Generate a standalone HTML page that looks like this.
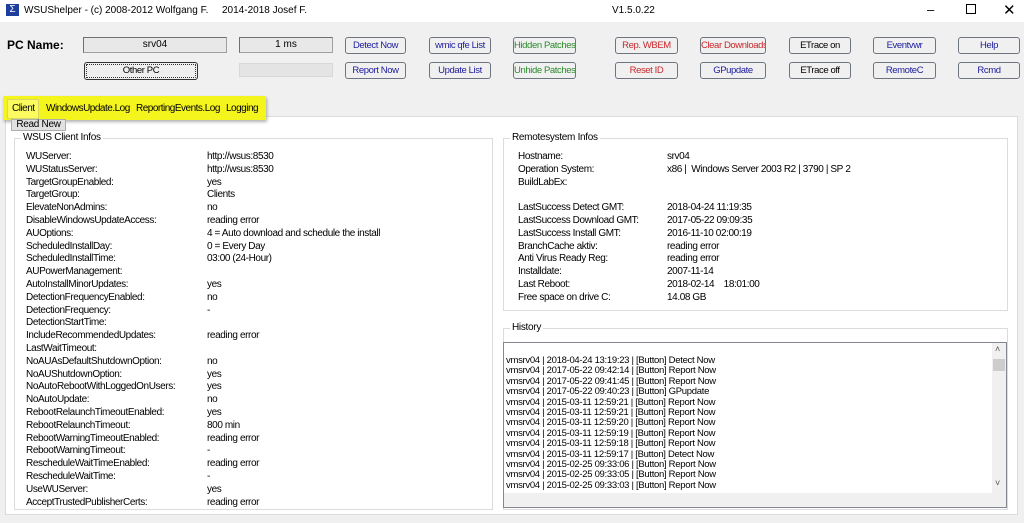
<!DOCTYPE html><html><head><meta charset="utf-8"><style>
*{box-sizing:border-box;margin:0;padding:0}
body{width:1024px;height:523px;background:#f0f0f0;font-family:"Liberation Sans",sans-serif;font-size:10px;color:#000;position:relative;overflow:hidden}
.a{position:absolute;white-space:nowrap}
.btn{position:absolute;height:17px;border:1px solid #6e7580;border-radius:3px;background:#f0f0f0;text-align:center;line-height:15px;font-size:9.5px;letter-spacing:-0.4px;white-space:nowrap;overflow:hidden}
.fld{position:absolute;height:16px;border:1px solid #a0a0a0;border-top-color:#707070;border-left-color:#707070;background:#e8e8e8;text-align:center;line-height:14px}
.bl{color:#1c1c9c}.rd{color:#c8282c}.gr{color:#2a8a2a}
.gb{position:absolute;border:1px solid #dcdcdc}
.gb .t{position:absolute;top:-7px;left:6px;background:#fff;padding:0 2px;letter-spacing:-0.3px}
.r{position:absolute;white-space:nowrap;letter-spacing:-0.4px}
.h{position:absolute;left:506px;font-size:9.5px;letter-spacing:-0.3px;white-space:nowrap}
.tab{position:absolute;top:103px;letter-spacing:-0.5px;white-space:nowrap}
</style></head><body>
<div class="a" style="left:0;top:0;width:1024px;height:22px;background:#fff"></div>
<div class="a" style="left:6px;top:4px;width:13px;height:12px;background:#1e3e9e;color:#fff;font-size:10px;line-height:12px;text-align:center">Σ</div>
<div class="a" style="left:24px;top:5px;font-size:10px">WSUShelper - (c) 2008-2012 Wolfgang F.</div>
<div class="a" style="left:222px;top:5px;font-size:10px">2014-2018 Josef F.</div>
<div class="a" style="left:612px;top:5px;font-size:10px">V1.5.0.22</div>
<div class="a" style="left:927px;top:2px;font-size:13px">–</div>
<div class="a" style="left:966px;top:4px;width:10px;height:10px;border:1px solid #000"></div>
<div class="a" style="left:1003px;top:1px;font-size:15px">✕</div>

<div class="a" style="left:7px;top:38px;font-size:12px;font-weight:bold">PC Name:</div>
<div class="fld" style="left:83px;top:37px;width:144px">srv04</div>
<div class="fld" style="left:239px;top:37px;width:94px">1 ms</div>
<div class="btn" style="left:84px;top:62px;width:114px;height:18px;border:1px solid #333;outline:1px dotted #333;outline-offset:-3px;line-height:16px">Other PC</div>
<div class="a" style="left:239px;top:63px;width:94px;height:14px;background:#e4e4e4;border:1px solid #d8d8d8"></div>

<div class="btn bl" style="left:345px;top:37px;width:61px">Detect Now</div>
<div class="btn bl" style="left:345px;top:62px;width:61px">Report Now</div>
<div class="btn bl" style="left:429px;top:37px;width:62px">wmic qfe List</div>
<div class="btn bl" style="left:429px;top:62px;width:62px">Update List</div>
<div class="btn gr" style="left:513px;top:37px;width:63px">Hidden Patches</div>
<div class="btn gr" style="left:513px;top:62px;width:63px">Unhide Patches</div>
<div class="btn rd" style="left:615px;top:37px;width:63px">Rep. WBEM</div>
<div class="btn rd" style="left:615px;top:62px;width:63px">Reset ID</div>
<div class="btn rd" style="left:700px;top:37px;width:66px">Clear Downloads</div>
<div class="btn bl" style="left:700px;top:62px;width:66px">GPupdate</div>
<div class="btn" style="left:789px;top:37px;width:62px">ETrace on</div>
<div class="btn" style="left:789px;top:62px;width:62px">ETrace off</div>
<div class="btn bl" style="left:873px;top:37px;width:63px">Eventvwr</div>
<div class="btn bl" style="left:873px;top:62px;width:63px">RemoteC</div>
<div class="btn bl" style="left:958px;top:37px;width:62px">Help</div>
<div class="btn bl" style="left:958px;top:62px;width:62px">Rcmd</div>

<div class="a" style="left:5px;top:116px;width:1013px;height:399px;background:#fff;border:1px solid #dcdcdc"></div>
<div class="a" style="left:3px;top:96px;width:263px;height:24px;background:#f5f51e;box-shadow:1px 2px 3px rgba(0,0,0,0.3)"></div>
<div class="a" style="left:7px;top:99px;width:32px;height:20px;background:#fbfb60;border:1px solid #d8d860"></div>
<div class="tab" style="left:12px">Client</div>
<div class="tab" style="left:46px">WindowsUpdate.Log</div>
<div class="tab" style="left:136px">ReportingEvents.Log</div>
<div class="tab" style="left:226px">Logging</div>
<div class="a" style="left:11px;top:119px;width:55px;height:12px;background:#e1e1e1;border:1px solid #adadad;text-align:center;line-height:10px;letter-spacing:-0.3px">Read New</div>

<div class="gb" style="left:14px;top:138px;width:479px;height:372px"><div class="t">WSUS Client Infos</div></div>
<div class="gb" style="left:503px;top:138px;width:505px;height:173px"><div class="t">Remotesystem Infos</div></div>
<div class="gb" style="left:503px;top:328px;width:505px;height:182px"><div class="t">History</div></div>
<div class="a" style="left:503px;top:342px;width:504px;height:166px;border:1px solid #828790;background:#fff"></div>
<div class="a" style="left:992px;top:343px;width:14px;height:150px;background:#f0f0f0"></div>
<div class="a" style="left:993px;top:359px;width:12px;height:12px;background:#cdcdcd"></div>
<div class="a" style="left:995px;top:344px;font-size:9px;color:#555">˄</div>
<div class="a" style="left:995px;top:478px;font-size:9px;color:#555">˅</div>
<div class="a" style="left:504px;top:493px;width:502px;height:14px;background:#f0f0f0"></div>

<div id="L"></div>
<script>
var L=[["WUServer:","http://wsus:8530"],["WUStatusServer:","http://wsus:8530"],["TargetGroupEnabled:","yes"],["TargetGroup:","Clients"],["ElevateNonAdmins:","no"],["DisableWindowsUpdateAccess:","reading error"],["AUOptions:","4 = Auto download and schedule the install"],["ScheduledInstallDay:","0 = Every Day"],["ScheduledInstallTime:","03:00 (24-Hour)"],["AUPowerManagement:",""],["AutoInstallMinorUpdates:","yes"],["DetectionFrequencyEnabled:","no"],["DetectionFrequency:","-"],["DetectionStartTime:",""],["IncludeRecommendedUpdates:","reading error"],["LastWaitTimeout:",""],["NoAUAsDefaultShutdownOption:","no"],["NoAUShutdownOption:","yes"],["NoAutoRebootWithLoggedOnUsers:","yes"],["NoAutoUpdate:","no"],["RebootRelaunchTimeoutEnabled:","yes"],["RebootRelaunchTimeout:","800 min"],["RebootWarningTimeoutEnabled:","reading error"],["RebootWarningTimeout:","-"],["RescheduleWaitTimeEnabled:","reading error"],["RescheduleWaitTime:","-"],["UseWUServer:","yes"],["AcceptTrustedPublisherCerts:","reading error"]];
var R=[["Hostname:","srv04"],["Operation System:","x86 |  Windows Server 2003 R2 | 3790 | SP 2"],["BuildLabEx:",""],["",""],["LastSuccess Detect GMT:","2018-04-24 11:19:35"],["LastSuccess Download GMT:","2017-05-22 09:09:35"],["LastSuccess Install GMT:","2016-11-10 02:00:19"],["BranchCache aktiv:","reading error"],["Anti Virus Ready Reg:","reading error"],["Installdate:","2007-11-14"],["Last Reboot:","2018-02-14    18:01:00"],["Free space on drive C:","14.08 GB"]];
var H=["2018-04-24 13:19:23 | [Button] Detect Now","2017-05-22 09:42:14 | [Button] Report Now","2017-05-22 09:41:45 | [Button] Report Now","2017-05-22 09:40:23 | [Button] GPupdate","2015-03-11 12:59:21 | [Button] Report Now","2015-03-11 12:59:21 | [Button] Report Now","2015-03-11 12:59:20 | [Button] Report Now","2015-03-11 12:59:19 | [Button] Report Now","2015-03-11 12:59:18 | [Button] Report Now","2015-03-11 12:59:17 | [Button] Detect Now","2015-02-25 09:33:06 | [Button] Report Now","2015-02-25 09:33:05 | [Button] Report Now","2015-02-25 09:33:03 | [Button] Report Now"];
var s="";
L.forEach(function(r,i){var y=151+i*12.8;s+='<div class="r" style="left:26px;top:'+y+'px">'+r[0]+'</div><div class="r" style="left:207px;top:'+y+'px">'+r[1]+'</div>';});
R.forEach(function(r,i){var y=151+i*12.8;s+='<div class="r" style="left:518px;top:'+y+'px">'+r[0]+'</div><div class="r" style="left:667px;top:'+y+'px">'+r[1].replace(/ /g,"&nbsp;")+'</div>';});
H.forEach(function(h,i){s+='<div class="h" style="top:'+(355+i*10.4)+'px">vmsrv04 | '+h+'</div>';});
document.getElementById("L").innerHTML=s;
</script>
</body></html>
